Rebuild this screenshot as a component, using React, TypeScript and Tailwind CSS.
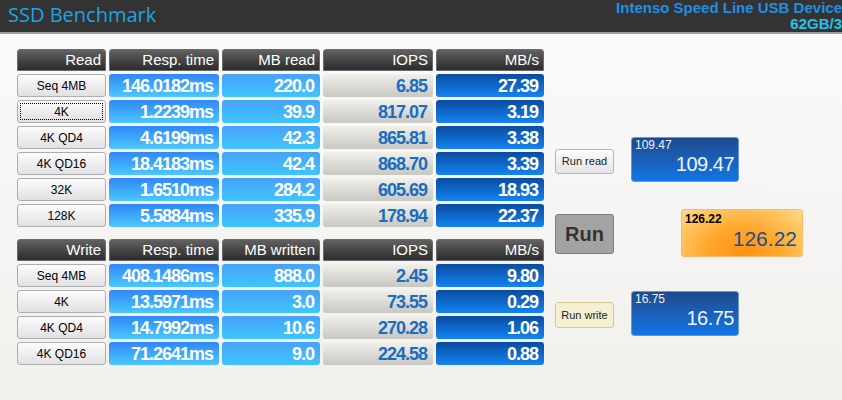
type Row = { label: string; resp: string; mb: string; iops: string; mbs: string; focused?: boolean };

const readRows: Row[] = [
  { label: 'Seq 4MB', resp: '146.0182ms', mb: '220.0', iops: '6.85', mbs: '27.39' },
  { label: '4K', resp: '1.2239ms', mb: '39.9', iops: '817.07', mbs: '3.19', focused: true },
  { label: '4K QD4', resp: '4.6199ms', mb: '42.3', iops: '865.81', mbs: '3.38' },
  { label: '4K QD16', resp: '18.4183ms', mb: '42.4', iops: '868.70', mbs: '3.39' },
  { label: '32K', resp: '1.6510ms', mb: '284.2', iops: '605.69', mbs: '18.93' },
  { label: '128K', resp: '5.5884ms', mb: '335.9', iops: '178.94', mbs: '22.37' },
];

const writeRows: Row[] = [
  { label: 'Seq 4MB', resp: '408.1486ms', mb: '888.0', iops: '2.45', mbs: '9.80' },
  { label: '4K', resp: '13.5971ms', mb: '3.0', iops: '73.55', mbs: '0.29' },
  { label: '4K QD4', resp: '14.7992ms', mb: '10.6', iops: '270.28', mbs: '1.06' },
  { label: '4K QD16', resp: '71.2641ms', mb: '9.0', iops: '224.58', mbs: '0.88' },
];

function HeaderCell({ children }: { children: string }) {
  return (
    <div className="flex h-[22px] items-center justify-end rounded-t-[3px] border border-[#6a6a6a] bg-linear-to-b from-[#626262] to-[#2c2c2c] pr-[4px] text-[15px] text-white">
      {children}
    </div>
  );
}

function LabelCell({ label, focused }: { label: string; focused?: boolean }) {
  return (
    <div className="relative flex h-[23px] items-center justify-center rounded-[3px] border border-[#adadad] bg-linear-to-b from-[#fcfcfd] to-[#e1e1e3] text-[12px] text-black">
      {label}
      {focused && <span className="absolute inset-[2px] border border-dotted border-black" />}
    </div>
  );
}

function NumCell({ value, tone }: { value: string; tone: 'resp' | 'mb' | 'iops' | 'mbs' }) {
  const tones = {
    resp: 'bg-linear-to-b from-[#3287f7] to-[#4bc7fd] text-white',
    mb: 'bg-linear-to-b from-[#47a2f8] to-[#3dc6fc] text-white',
    iops: 'bg-linear-to-b from-[#f1f0eb] to-[#c9c7c1] text-[#1a6cc0]',
    mbs: 'bg-linear-to-b from-[#0b4c9f] to-[#1384f3] text-white',
  };
  return (
    <div className={`flex h-[23px] items-center justify-end rounded-[3px] pr-[6px] text-[18px] font-bold leading-none tracking-[-1px] ${tones[tone]}`}>
      {value}
    </div>
  );
}

function ResultTable({ title, mbLabel, rows }: { title: string; mbLabel: string; rows: Row[] }) {
  return (
    <div className="grid grid-cols-[89px_110px_98px_110px_108px] gap-[3px]">
      <HeaderCell>{title}</HeaderCell>
      <HeaderCell>Resp. time</HeaderCell>
      <HeaderCell>{mbLabel}</HeaderCell>
      <HeaderCell>IOPS</HeaderCell>
      <HeaderCell>MB/s</HeaderCell>
      {rows.map((r) => (
        <div key={r.label} className="contents">
          <LabelCell label={r.label} focused={r.focused} />
          <NumCell value={r.resp} tone="resp" />
          <NumCell value={r.mb} tone="mb" />
          <NumCell value={r.iops} tone="iops" />
          <NumCell value={r.mbs} tone="mbs" />
        </div>
      ))}
    </div>
  );
}

function ScoreBox({ value }: { value: string }) {
  return (
    <div className="flex h-[45px] w-[108px] flex-col rounded-[3px] border border-[#6c96cf] bg-linear-to-b from-[#1d4a8e] to-[#0f76e5] px-[3px] text-[#eef4ff]">
      <span className="text-[12px] leading-[15px]">{value}</span>
      <span className="self-end pr-[1px] text-[20px] leading-[22px] tracking-[-0.5px]">{value}</span>
    </div>
  );
}

export default function App() {
  return (
    <div className="h-[400px] w-[842px] overflow-hidden font-['Liberation_Sans',Arial,sans-serif]">
      <header className="flex h-[34px] items-start justify-between border-b-2 border-[#9c9c9c] bg-[#333333]">
        <h1 className="pl-[8px] pt-[1px] font-['Open_Sans',sans-serif] text-[20px] leading-[28px] text-[#1ea3e6]">
          SSD Benchmark
        </h1>
        <div className="text-right text-[15px] font-bold leading-[16px]">
          <div className="text-[#1f8fe2]">Intenso Speed Line USB Device</div>
          <div className="text-[#22c3ee]">62GB/3</div>
        </div>
      </header>

      <main className="flex h-[366px] bg-linear-to-b from-[#fafafc] to-[#f1f0ec] pl-[17px] pt-[15px]">
        <section className="flex flex-col gap-[12px]">
          <ResultTable title="Read" mbLabel="MB read" rows={readRows} />
          <ResultTable title="Write" mbLabel="MB written" rows={writeRows} />
        </section>

        <aside className="flex flex-col pl-[11px]">
          <div className="mt-[88px] flex h-[45px] items-start gap-[17px]">
            <button className="mt-[12px] h-[25px] w-[59px] rounded-[3px] border border-[#b5b5b5] bg-linear-to-b from-[#fbfbfb] to-[#e5e5e7] text-[11px] text-[#222]">
              Run read
            </button>
            <ScoreBox value="109.47" />
          </div>

          <div className="mt-[27px] flex h-[48px] items-start gap-[67px]">
            <button className="mt-[5px] h-[40px] w-[59px] rounded-[3px] border border-[#7c7c7c] bg-[#a3a3a3] text-[20px] font-bold text-[#333]">
              Run
            </button>
            <div className="flex h-[48px] w-[122px] flex-col rounded-[3px] border border-[#f3bb6a] bg-[radial-gradient(ellipse_at_50%_100%,#ff9210_0%,#ffa82e_45%,#ffc866_80%,#ffd890_100%)] px-[3px]">
              <span className="pt-[2px] text-[12px] font-bold leading-[15px] text-black">126.22</span>
              <span className="self-end pr-[2px] text-[21px] leading-[24px] text-[#16508f]">126.22</span>
            </div>
          </div>

          <div className="mt-[34px] flex h-[45px] items-start gap-[17px]">
            <button className="mt-[11px] h-[26px] w-[59px] rounded-[3px] border border-[#d6c98f] bg-[#f6f0d2] text-[11px] text-[#222]">
              Run write
            </button>
            <ScoreBox value="16.75" />
          </div>
        </aside>
      </main>
    </div>
  );
}
